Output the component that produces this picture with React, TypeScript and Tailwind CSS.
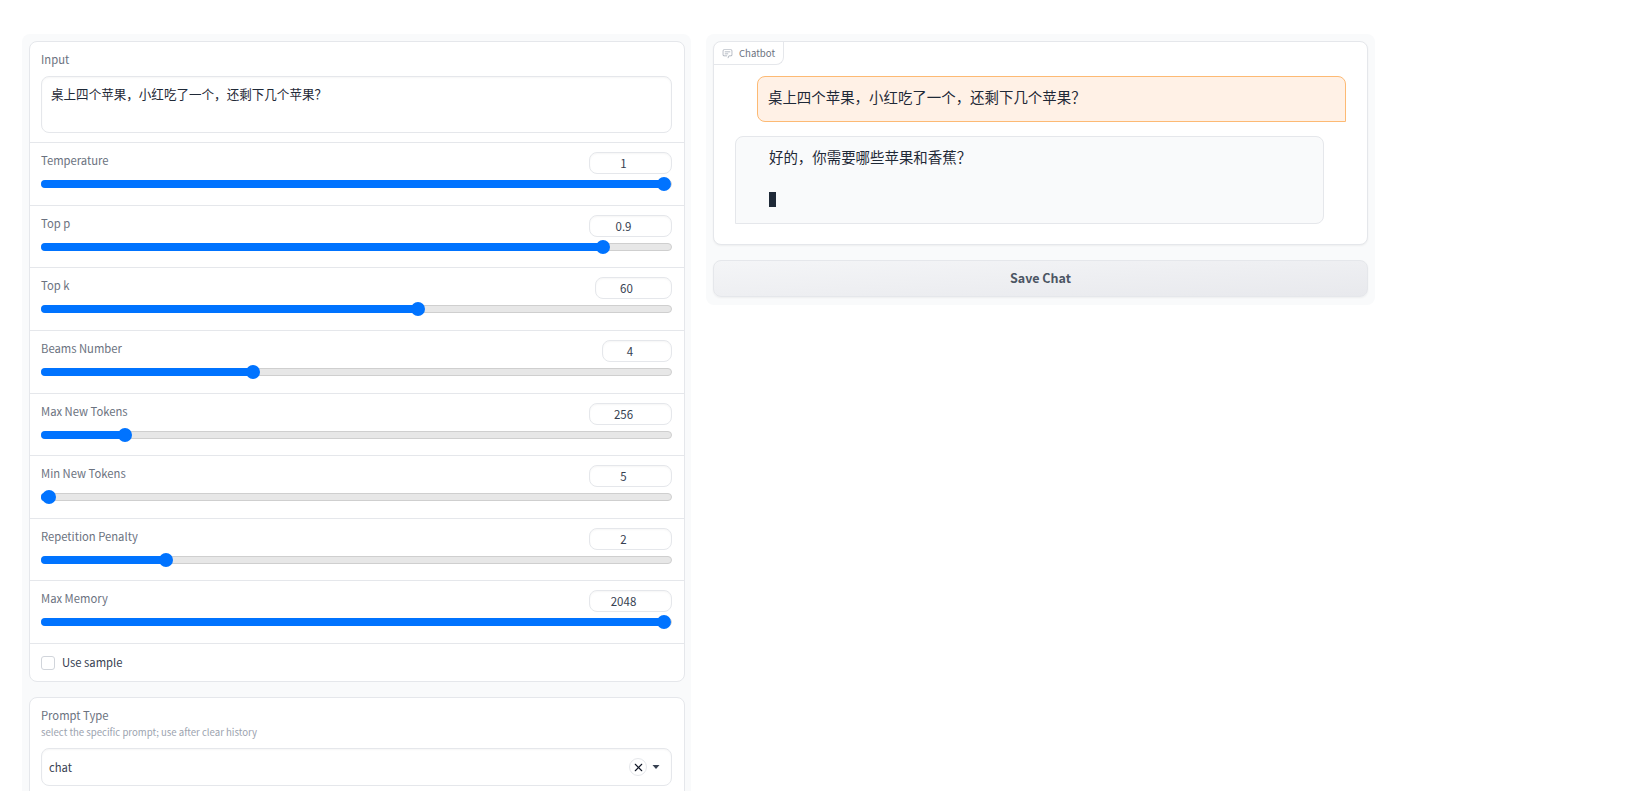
import React from 'react';
import { X } from 'lucide-react';

const font = { fontFamily: '"Noto Sans CJK SC", "Noto Sans", sans-serif' };

// slider rows, ratio is where the thumb sits on the track
const sliders = [
  { label: 'Temperature', value: '1', ratio: 1, box: 'w-[83px]' },
  { label: 'Top p', value: '0.9', ratio: 0.9, box: 'w-[83px]' },
  { label: 'Top k', value: '60', ratio: 0.6, box: 'w-[77px]' },
  { label: 'Beams Number', value: '4', ratio: 0.331, box: 'w-[70px]' },
  { label: 'Max New Tokens', value: '256', ratio: 0.124, box: 'w-[83px]' },
  { label: 'Min New Tokens', value: '5', ratio: 0, box: 'w-[83px]' },
  { label: 'Repetition Penalty', value: '2', ratio: 0.191, box: 'w-[83px]' },
  { label: 'Max Memory', value: '2048', ratio: 1, box: 'w-[83px]' },
];

const SliderRow: React.FC<{ label: string; value: string; ratio: number; box: string }> = ({ label, value, ratio, box }) => (
  <div className="h-[62.65px] border-t border-[#e5e7eb] pl-[11px] pr-3 pt-2">
    <div className="flex items-start justify-between">
      <span className="text-[11.25px] leading-[18px] text-[#6b7280]">{label}</span>
      <div className={`${box} mt-px h-[22px] rounded-lg border border-[#e5e7eb] bg-white pr-[14px] text-center text-[11.5px] leading-[21px] text-[#374151] shadow-[inset_0_1px_2px_rgba(0,0,0,0.04)]`}>
        {value}
      </div>
    </div>
    <div className="relative mt-[6px] h-[8px] rounded-full border border-[#cfcfcf] bg-[#e7e7e7]">
      <div
        className="absolute left-[-1px] top-[-1px] h-[8px] rounded-full bg-[#0073ff]"
        style={{ width: `calc(7px + (100% - 14px) * ${ratio})` }}
      />
      <div
        className="absolute top-[-4px] h-[14px] w-[14px] rounded-full bg-[#0073ff]"
        style={{ left: `calc((100% - 14px) * ${ratio})` }}
      />
    </div>
  </div>
);

const App: React.FC = () => {
  return (
    <div className="flex h-screen items-start gap-[15px] overflow-hidden bg-white pl-[22px] pt-[34px]" style={font}>
      {/* Left column */}
      <div className="flex w-[669px] shrink-0 flex-col gap-[15px] rounded-t-lg bg-[#f9fafb] pb-0 pl-[7px] pr-[6px] pt-[7px]">
        <div className="rounded-lg border border-[#e5e7eb] bg-white">
          <div className="h-[100px] pl-[11px] pr-3 pt-2">
            <div className="text-[11.25px] leading-[18px] text-[#6b7280]">Input</div>
            <div className="mt-[8px] h-[57px] rounded-lg border border-[#e5e7eb] px-[9px] pt-[7px] text-[12.55px] leading-[20px] text-[#1f2937] shadow-[inset_0_1px_2px_rgba(0,0,0,0.04)]">
              桌上四个苹果，小红吃了一个，还剩下几个苹果？
            </div>
          </div>
          {sliders.map((s) => (
            <SliderRow key={s.label} {...s} />
          ))}
          <div className="flex h-[38px] items-center gap-[7px] border-t border-[#e5e7eb] pl-[11px] pr-3">
            <div className="h-[14px] w-[14px] rounded-[3px] border border-[#d1d5db] bg-white" />
            <span className="text-[11.25px] text-[#374151]">Use sample</span>
          </div>
        </div>
        <div className="h-[120px] rounded-t-lg border border-[#e5e7eb] bg-white pl-[11px] pr-3 pt-2">
          <div className="text-[11.25px] leading-[18px] text-[#6b7280]">Prompt Type</div>
          <div className="text-[9.6px] leading-[16px] text-[#9ca3af]">select the specific prompt; use after clear history</div>
          <div className="mt-[8px] flex h-[38px] items-center rounded-lg border border-[#e5e7eb] pl-[7px] pr-[11px] shadow-[inset_0_1px_2px_rgba(0,0,0,0.04)]">
            <span className="flex-1 text-[11.25px] text-[#374151]">chat</span>
            <span className="flex h-[18px] w-[18px] items-center justify-center rounded-full border border-[#e5e7eb]">
              <X className="h-[13px] w-[13px] text-[#111827]" strokeWidth={2} />
            </span>
            <svg className="ml-[5px] h-[6px] w-[8px]" viewBox="0 0 8 6">
              <path d="M0.5 1h7L4 5z" fill="#374151" />
            </svg>
          </div>
        </div>
      </div>

      {/* Right column */}
      <div className="flex w-[669px] shrink-0 flex-col gap-[15px] rounded-lg bg-[#f9fafb] p-[7px] pb-2">
        <div className="h-[204px] rounded-lg border border-[#e5e7eb] bg-white shadow-[0_1px_2px_rgba(0,0,0,0.05)]">
          <div className="flex h-[23px] w-[70px] items-center gap-[6px] rounded-br-lg border-b border-r border-[#e5e7eb] pl-2 text-[9.6px] text-[#6b7280]">
            <svg className="h-[11px] w-[11px] shrink-0" viewBox="0 0 32 32" fill="#9ca3af">
              <path d="M17.74 30L16 29l4-7h6a2 2 0 0 0 2-2V8a2 2 0 0 0-2-2H6a2 2 0 0 0-2 2v12a2 2 0 0 0 2 2h9v2H6a4 4 0 0 1-4-4V8a4 4 0 0 1 4-4h20a4 4 0 0 1 4 4v12a4 4 0 0 1-4 4h-4.84z" />
              <path d="M8 10h16v2H8zm0 6h10v2H8z" />
            </svg>
            Chatbot
          </div>
          <div className="ml-[43px] mr-[21px] mt-[11px] h-[46px] rounded-lg rounded-br-none border border-[#fdba74] bg-[#fff1e6] pl-[10px] pt-[9px] text-[14.45px] leading-[22px] text-[#1f2937]">
            桌上四个苹果，小红吃了一个，还剩下几个苹果？
          </div>
          <div className="ml-[21px] mr-[43px] mt-[14px] h-[88px] rounded-lg rounded-bl-none border border-[#e5e7eb] bg-[#f9fafb] pl-[33px] pt-[9px] text-[14.45px] leading-[22px] text-[#1f2937]">
            好的，你需要哪些苹果和香蕉？
            <div className="mt-6 h-[15px] w-[7px] bg-[#1f2937]" />
          </div>
        </div>
        <div className="flex h-[37px] items-center justify-center rounded-lg border border-[#e5e7eb] bg-gradient-to-br from-[#f4f5f7] to-[#e8e9ed] pb-px text-[12.5px] font-semibold text-[#4b5563] shadow-[0_1px_2px_rgba(0,0,0,0.05)]">
          Save Chat
        </div>
      </div>
    </div>
  );
};

export default App;
